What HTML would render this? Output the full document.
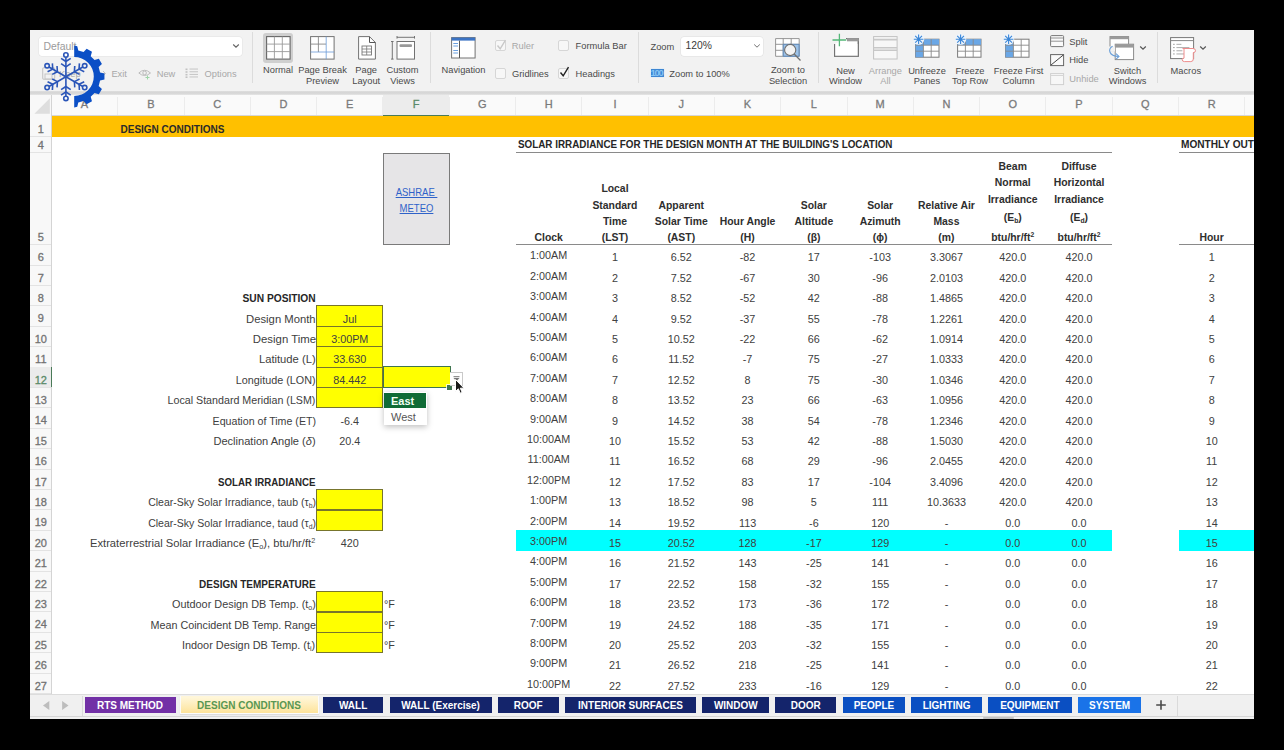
<!DOCTYPE html>
<html><head><meta charset="utf-8"><title>Excel</title><style>
*{margin:0;padding:0;box-sizing:border-box}
html,body{width:1284px;height:750px;background:#000;overflow:hidden}
body{position:relative;font-family:"Liberation Sans",sans-serif}
#app{position:absolute;left:30px;top:30px;width:1224px;height:689px;background:#fff;overflow:hidden}
#in{position:absolute;left:-30px;top:-30px;width:1284px;height:750px}
.a{position:absolute}
.t{position:absolute;white-space:nowrap;color:#404040;font-size:10.8px;line-height:12px}
.b{font-weight:bold}
.c{text-align:center}
.r{text-align:right}
sub,sup{font-size:65%;line-height:0}
sub{vertical-align:-0.25em}sup{vertical-align:0.55em}
.rb{font-size:9.2px;color:#4a4a4a;line-height:11px}
</style></head>
<body><div id="app"><div id="in">
<div class="a" style="left:30px;top:30px;width:1224px;height:62px;background:#f2f2f2"></div>
<div class="a" style="left:30px;top:91px;width:1224px;height:4px;background:linear-gradient(#dedede,#d4d4d4 50%,#e6e6e6)"></div>
<div class="a" style="left:39.4px;top:36.9px;width:203px;height:18.8px;background:#fff;border-radius:3px;box-shadow:0 0 0 0.5px #e2e2e2"></div>
<div class="t" style="left:43.5px;top:40.5px;font-size:10.4px;color:#9b9b9b">Default</div>
<svg class="a" style="left:232px;top:43px;overflow:visible" width="8" height="6" viewBox="0 0 8 6"><path d="M1.2,1.5 L4,4.2 L6.8,1.5" fill="none" stroke="#666" stroke-width="1.1"/></svg>
<svg class="a" style="left:42px;top:67px;overflow:visible" width="14" height="13" viewBox="0 0 14 13"><rect x="0.7" y="0.7" width="12" height="11.5" rx="1.2" fill="none" stroke="#c6c6c6" stroke-width="1.1"/><rect x="3" y="7" width="7" height="5" fill="none" stroke="#c6c6c6" stroke-width="1"/></svg>
<div class="t" style="left:59.0px;top:68.9px;font-size:9.3px;line-height:11px;color:#a8a8a8">Keep</div>
<svg class="a" style="left:97px;top:68px;overflow:visible" width="11" height="11" viewBox="0 0 11 11"><path d="M2,5.5 L8.5,5.5 M6,3 L8.5,5.5 L6,8" fill="none" stroke="#c4c4c4" stroke-width="1"/></svg>
<div class="t" style="left:111.4px;top:68.9px;font-size:9.3px;line-height:11px;color:#a8a8a8">Exit</div>
<svg class="a" style="left:138px;top:67px;overflow:visible" width="14" height="13" viewBox="0 0 14 13"><path d="M0.8,6 Q6.5,0.5 12.5,6 Q6.5,11 0.8,6 Z" fill="none" stroke="#bdbdbd" stroke-width="1"/><circle cx="6.6" cy="5.9" r="1.8" fill="none" stroke="#bdbdbd" stroke-width="1"/><path d="M9.5,8.5 L9.5,12.5 M7.5,10.5 L11.5,10.5" stroke="#9fd4a8" stroke-width="1"/></svg>
<div class="t" style="left:156.7px;top:68.9px;font-size:9.3px;line-height:11px;color:#a8a8a8">New</div>
<svg class="a" style="left:185px;top:68px;overflow:visible" width="14" height="10" viewBox="0 0 14 10"><rect x="0.5" y="0.5" width="2" height="1.6" fill="#c2c2c2"/><rect x="4.5" y="0.5" width="8.5" height="1.1" fill="#c8c8c8"/><rect x="0.5" y="3.2" width="2" height="1.6" fill="#c2c2c2"/><rect x="4.5" y="3.2" width="8.5" height="1.1" fill="#c8c8c8"/><rect x="0.5" y="5.9" width="2" height="1.6" fill="#c2c2c2"/><rect x="4.5" y="5.9" width="8.5" height="1.1" fill="#c8c8c8"/><rect x="0.5" y="8.4" width="2" height="1.6" fill="#c2c2c2"/><rect x="4.5" y="8.4" width="8.5" height="1.1" fill="#c8c8c8"/></svg>
<div class="t" style="left:204.6px;top:68.9px;font-size:9.3px;line-height:11px;color:#a8a8a8">Options</div>
<div class="a" style="left:252.2px;top:32px;width:1px;height:51px;background:#dcdcdc"></div>
<div class="a" style="left:262.6px;top:33px;width:30.3px;height:29.6px;background:#cfcfcf;border-radius:3px"></div>
<svg class="a" style="left:265.5px;top:36.2px;overflow:visible" width="25" height="24" viewBox="0 0 25 24"><rect x="0.6" y="0.6" width="23.5" height="22.5" fill="#fff" stroke="#666" stroke-width="1.1"/><path d="M8.4,0.6 V23.1 M16.3,0.6 V23.1 M0.6,8.1 H24.1 M0.6,15.6 H24.1" stroke="#9a9a9a" stroke-width="0.9"/></svg>
<div class="t c" style="left:238.1px;top:65.4px;width:80px;font-size:9.3px;line-height:11px;color:#4a4a4a">Normal</div>
<svg class="a" style="left:310px;top:36.2px;overflow:visible" width="25" height="24" viewBox="0 0 25 24"><rect x="0.6" y="0.6" width="23.5" height="22.5" fill="#fff" stroke="#727272" stroke-width="1"/><path d="M8.4,0.6 V16 M0.6,8.1 H16 " stroke="#888" stroke-width="0.9"/><path d="M16.2,0.6 V23.1 M0.6,16 H24.1" stroke="#6a9ad8" stroke-width="0.8"/></svg>
<div class="t c" style="left:282.5px;top:65.4px;width:80px;font-size:9.3px;line-height:11px;color:#4a4a4a">Page Break</div>
<div class="t c" style="left:282.5px;top:75.7px;width:80px;font-size:9.3px;line-height:11px;color:#4a4a4a">Preview</div>
<svg class="a" style="left:357.5px;top:36.2px;overflow:visible" width="18" height="24" viewBox="0 0 18 24"><path d="M0.6,0.6 H11.5 L17.4,6.5 V23.1 H0.6 Z" fill="#fff" stroke="#727272" stroke-width="1"/><path d="M11.5,0.6 V6.5 H17.4" fill="none" stroke="#555" stroke-width="1"/><rect x="4" y="10" width="9.5" height="9" fill="none" stroke="#777" stroke-width="0.9"/><path d="M4,13 H13.5 M4,16 H13.5 M8.7,10 V19" stroke="#777" stroke-width="0.8"/></svg>
<div class="t c" style="left:326.2px;top:65.4px;width:80px;font-size:9.3px;line-height:11px;color:#4a4a4a">Page</div>
<div class="t c" style="left:326.2px;top:75.7px;width:80px;font-size:9.3px;line-height:11px;color:#4a4a4a">Layout</div>
<svg class="a" style="left:390.6px;top:36.2px;overflow:visible" width="24" height="24" viewBox="0 0 24 24"><rect x="6" y="5.5" width="17.5" height="17.6" fill="#fff" stroke="#727272" stroke-width="1"/><rect x="8.5" y="8.3" width="12.5" height="2.6" rx="1" fill="#999"/><path d="M6,1.3 H23.5 M6,0 V2.6 M23.5,0 V2.6" stroke="#666" stroke-width="0.9"/><path d="M1.3,5.5 V23.1 M0,5.5 H2.6 M0,23.1 H2.6" stroke="#666" stroke-width="0.9"/></svg>
<div class="t c" style="left:362.5px;top:65.4px;width:80px;font-size:9.3px;line-height:11px;color:#4a4a4a">Custom</div>
<div class="t c" style="left:362.5px;top:75.7px;width:80px;font-size:9.3px;line-height:11px;color:#4a4a4a">Views</div>
<div class="a" style="left:429.8px;top:32px;width:1px;height:51px;background:#dcdcdc"></div>
<svg class="a" style="left:451.3px;top:36.5px;overflow:visible" width="25" height="22" viewBox="0 0 25 22"><rect x="0.6" y="0.6" width="23.5" height="20.4" fill="#fff" stroke="#727272" stroke-width="1"/><rect x="0.6" y="0.6" width="23.5" height="3" fill="#3b73c4"/><path d="M8.5,3.6 V21" stroke="#555" stroke-width="1"/><path d="M2.3,6.5 H7" stroke="#5a95dd" stroke-width="0.9"/><path d="M2.3,9 H7" stroke="#5a95dd" stroke-width="0.9"/><path d="M2.3,13.5 H7" stroke="#5a95dd" stroke-width="0.9"/><path d="M2.3,16 H7" stroke="#5a95dd" stroke-width="0.9"/></svg>
<div class="t c" style="left:428.5px;top:65.4px;width:70px;font-size:9.3px;line-height:11px;color:#4a4a4a">Navigation</div>
<div class="a" style="left:494.6px;top:40.4px;width:11px;height:11px;border-radius:2px;background:#f7f7f7;border:1px solid #d6d6d6"></div>
<svg class="a" style="left:495.6px;top:38.9px;overflow:visible" width="11" height="12" viewBox="0 0 11 12"><path d="M1.5,6.5 L4.2,9.8 L9.5,1.2" fill="none" stroke="#c8c8c8" stroke-width="1.4"/></svg>
<div class="t" style="left:511.8px;top:41.2px;font-size:9.3px;line-height:11px;color:#a8a8a8">Ruler</div>
<div class="a" style="left:558.4px;top:40.4px;width:11px;height:11px;border-radius:2px;background:#f7f7f7;border:1px solid #d6d6d6"></div>
<div class="t" style="left:575.6px;top:41.2px;font-size:9.3px;line-height:11px;color:#4a4a4a">Formula Bar</div>
<div class="a" style="left:494.6px;top:67.6px;width:11px;height:11px;border-radius:2px;background:#f7f7f7;border:1px solid #d6d6d6"></div>
<div class="t" style="left:512.0px;top:68.8px;font-size:9.3px;line-height:11px;color:#4a4a4a">Gridlines</div>
<div class="a" style="left:558.4px;top:67.6px;width:11px;height:11px;border-radius:2px;background:#f7f7f7;border:1px solid #d6d6d6"></div>
<svg class="a" style="left:559.4px;top:66.1px;overflow:visible" width="11" height="12" viewBox="0 0 11 12"><path d="M1.5,6.5 L4.2,9.8 L9.5,1.2" fill="none" stroke="#222" stroke-width="1.4"/></svg>
<div class="t" style="left:575.6px;top:68.8px;font-size:9.3px;line-height:11px;color:#4a4a4a">Headings</div>
<div class="a" style="left:637.7px;top:32px;width:1px;height:51px;background:#dcdcdc"></div>
<div class="t" style="left:650.5px;top:41.8px;font-size:9.3px;line-height:11px;color:#4a4a4a">Zoom</div>
<div class="a" style="left:680.8px;top:36.9px;width:82.6px;height:18.9px;background:#fff;border-radius:3px;box-shadow:0 0 0 0.5px #dedede"></div>
<div class="t" style="left:685.5px;top:40.4px;font-size:10.3px;color:#3a3a3a">120%</div>
<svg class="a" style="left:753px;top:43px;overflow:visible" width="8" height="6" viewBox="0 0 8 6"><path d="M1.2,1.5 L4,4.2 L6.8,1.5" fill="none" stroke="#727272" stroke-width="1"/></svg>
<div class="a" style="left:650.5px;top:69px;width:13.6px;height:8.4px;background:#3d86d2;box-shadow:0 0 1.5px #bfe0ff"></div>
<div class="t" style="left:650.6px;top:68.3px;font-size:9.5px;line-height:10px;color:#86c4f4;letter-spacing:-1.3px;font-weight:bold">100</div>
<div class="t" style="left:669.3px;top:68.8px;font-size:9.3px;line-height:11px;color:#4a4a4a">Zoom to 100%</div>
<svg class="a" style="left:775px;top:38.4px;overflow:visible" width="27" height="24" viewBox="0 0 27 24"><rect x="0.6" y="0.6" width="23.6" height="17.7" fill="#fff"/><rect x="8.2" y="6.3" width="16" height="12" fill="#9cc3ea"/><path d="M0.6,0.6 H24.2 V18.3 H0.6 Z M8.2,0.6 V18.3 M16.2,0.6 V6.3 M0.6,6.3 H24.2 M0.6,12.3 H8.2" fill="#fff" fill-opacity="0" stroke="#8a8a8a" stroke-width="0.9"/><path d="M8.2,6.3 H24.2 V18.3 H8.2 Z" fill="none" stroke="#5d8fc6" stroke-width="0.9"/><circle cx="15.2" cy="12" r="5.6" fill="#f4f4f4" stroke="#707070" stroke-width="1.1"/><path d="M19.2,16 L25.5,22.5" stroke="#707070" stroke-width="1.2"/></svg>
<div class="t c" style="left:748.0px;top:65.4px;width:80px;font-size:9.3px;line-height:11px;color:#4a4a4a">Zoom to</div>
<div class="t c" style="left:748.0px;top:75.8px;width:80px;font-size:9.3px;line-height:11px;color:#4a4a4a">Selection</div>
<div class="a" style="left:818.2px;top:32px;width:1px;height:51px;background:#dcdcdc"></div>
<svg class="a" style="left:832.5px;top:35.4px;overflow:visible" width="26" height="22" viewBox="0 0 26 22"><path d="M1.6,9 V21.3 H25.3 V3.6 H13" fill="#fff" stroke="#707070" stroke-width="1.1"/><rect x="1.6" y="9" width="23.7" height="12.3" fill="#fff"/><path d="M1.6,9 V21.3 H25.3 V3.6" fill="none" stroke="#707070" stroke-width="1.1"/><rect x="14" y="3.1" width="11.8" height="3.2" fill="#9a9a9a"/><path d="M6.4,-1.3 V11.3 M-0.5,5 H13.2" stroke="#54b878" stroke-width="1.3"/></svg>
<div class="t c" style="left:805.5px;top:65.7px;width:80px;font-size:9.3px;line-height:11px;color:#4a4a4a">New</div>
<div class="t c" style="left:805.5px;top:76.1px;width:80px;font-size:9.3px;line-height:11px;color:#4a4a4a">Window</div>
<svg class="a" style="left:873.2px;top:36.4px;overflow:visible" width="25" height="24" viewBox="0 0 25 24"><rect x="0.6" y="0.6" width="23.5" height="22.4" fill="#f7f7f7" stroke="#c2c2c2" stroke-width="1"/><path d="M0.6,3.6 H24 M0.6,11.8 H24 M0.6,14.2 H24" stroke="#c8c8c8" stroke-width="1.6"/></svg>
<div class="t c" style="left:845.4px;top:65.7px;width:80px;font-size:9.3px;line-height:11px;color:#a8a8a8">Arrange</div>
<div class="t c" style="left:845.4px;top:76.1px;width:80px;font-size:9.3px;line-height:11px;color:#a8a8a8">All</div>
<svg class="a" style="left:913.5px;top:34.5px;overflow:visible" width="26" height="23" viewBox="0 0 26 23"><rect x="1.6" y="4.2" width="23.40" height="18.00" fill="#fff" stroke="#7a7a7a" stroke-width="1"/><rect x="1.6" y="4.2" width="23.40" height="6.00" fill="#6aa7e6"/><rect x="1.6" y="4.2" width="7.80" height="18.00" fill="#6aa7e6"/><path d="M9.40,4.2 V22.2 M17.20,4.2 V22.2 M1.6,10.20 H25 M1.6,16.20 H25" stroke="#8a8a8a" stroke-width="0.9"/><circle cx="4.6" cy="4.2" r="5.6" fill="#eef4fb"/><path d="M4.6,-0.6 V9 M-0.2,4.2 H9.4 M1.2,0.8 L8,7.6 M1.2,7.6 L8,0.8" stroke="#3a86d8" stroke-width="1.1"/></svg>
<div class="t c" style="left:887.0px;top:65.7px;width:80px;font-size:9.3px;line-height:11px;color:#4a4a4a">Unfreeze</div>
<div class="t c" style="left:887.0px;top:76.1px;width:80px;font-size:9.3px;line-height:11px;color:#4a4a4a">Panes</div>
<svg class="a" style="left:955.6px;top:34.5px;overflow:visible" width="26" height="23" viewBox="0 0 26 23"><rect x="1.6" y="4.2" width="23.40" height="18.00" fill="#fff" stroke="#7a7a7a" stroke-width="1"/><rect x="1.6" y="4.2" width="23.40" height="6.00" fill="#6aa7e6"/><path d="M9.40,4.2 V22.2 M17.20,4.2 V22.2 M1.6,10.20 H25 M1.6,16.20 H25" stroke="#8a8a8a" stroke-width="0.9"/><circle cx="4.6" cy="4.2" r="5.6" fill="#eef4fb"/><path d="M4.6,-0.6 V9 M-0.2,4.2 H9.4 M1.2,0.8 L8,7.6 M1.2,7.6 L8,0.8" stroke="#3a86d8" stroke-width="1.1"/></svg>
<div class="t c" style="left:930.0px;top:65.7px;width:80px;font-size:9.3px;line-height:11px;color:#4a4a4a">Freeze</div>
<div class="t c" style="left:930.0px;top:76.1px;width:80px;font-size:9.3px;line-height:11px;color:#4a4a4a">Top Row</div>
<svg class="a" style="left:1004px;top:34.5px;overflow:visible" width="26" height="23" viewBox="0 0 26 23"><rect x="1.6" y="4.2" width="23.40" height="18.00" fill="#fff" stroke="#7a7a7a" stroke-width="1"/><rect x="1.6" y="4.2" width="7.80" height="18.00" fill="#6aa7e6"/><path d="M9.40,4.2 V22.2 M17.20,4.2 V22.2 M1.6,10.20 H25 M1.6,16.20 H25" stroke="#8a8a8a" stroke-width="0.9"/><circle cx="4.6" cy="4.2" r="5.6" fill="#eef4fb"/><path d="M4.6,-0.6 V9 M-0.2,4.2 H9.4 M1.2,0.8 L8,7.6 M1.2,7.6 L8,0.8" stroke="#3a86d8" stroke-width="1.1"/></svg>
<div class="t c" style="left:983.6px;top:65.7px;width:70px;font-size:9.3px;line-height:11px;color:#4a4a4a">Freeze First</div>
<div class="t c" style="left:978.6px;top:76.1px;width:80px;font-size:9.3px;line-height:11px;color:#4a4a4a">Column</div>
<svg class="a" style="left:1050px;top:35.1px;overflow:visible" width="15" height="12" viewBox="0 0 15 12"><rect x="0.6" y="0.6" width="13" height="11" rx="1" fill="#fafafa" stroke="#777" stroke-width="1"/><path d="M0.6,3 H13.6 M0.6,6.2 H13.6" stroke="#888" stroke-width="0.9"/></svg>
<div class="t" style="left:1069.3px;top:36.5px;font-size:9.3px;line-height:11px;color:#4a4a4a">Split</div>
<svg class="a" style="left:1050px;top:54px;overflow:visible" width="15" height="12" viewBox="0 0 15 12"><rect x="0.6" y="0.6" width="13" height="11" fill="#fafafa" stroke="#666" stroke-width="1"/><path d="M1,11 L13.3,1" stroke="#444" stroke-width="1"/></svg>
<div class="t" style="left:1069.3px;top:55.4px;font-size:9.3px;line-height:11px;color:#4a4a4a">Hide</div>
<svg class="a" style="left:1050px;top:72.5px;overflow:visible" width="15" height="12" viewBox="0 0 15 12"><rect x="0.6" y="0.6" width="13" height="11" fill="#f7f7f7" stroke="#d0d0d0" stroke-width="1"/><path d="M0.6,2.5 H13.6" stroke="#d6d6d6" stroke-width="1"/></svg>
<div class="t" style="left:1069.3px;top:74.2px;font-size:9.3px;line-height:11px;color:#a8a8a8">Unhide</div>
<svg class="a" style="left:1108.7px;top:36px;overflow:visible" width="26" height="25" viewBox="0 0 26 25"><rect x="1" y="0.6" width="18.6" height="14" fill="#fff" stroke="#8a8a8a" stroke-width="1"/><rect x="1" y="0.6" width="18.6" height="2.6" fill="#9a9a9a"/><rect x="6.2" y="8.2" width="18.4" height="15.4" fill="#fff" stroke="#8a8a8a" stroke-width="1"/><rect x="6.2" y="8.2" width="18.4" height="3.4" fill="#9a9a9a"/><rect x="0" y="10.5" width="6" height="5" fill="#f2f2f2"/><path d="M3.6,10.3 C-1.2,13 -0.5,20.2 9.6,20.4" fill="none" stroke="#6a9fd8" stroke-width="1.1"/><path d="M7,17.6 L10,20.4 L7,23.2" fill="none" stroke="#6a9fd8" stroke-width="1.1"/></svg>
<svg class="a" style="left:1139px;top:45px;overflow:visible" width="8" height="6" viewBox="0 0 8 6"><path d="M1.2,1.5 L4,4.2 L6.8,1.5" fill="none" stroke="#555" stroke-width="1.2"/></svg>
<div class="t c" style="left:1087.5px;top:65.7px;width:80px;font-size:9.3px;line-height:11px;color:#4a4a4a">Switch</div>
<div class="t c" style="left:1087.5px;top:75.9px;width:80px;font-size:9.3px;line-height:11px;color:#4a4a4a">Windows</div>
<div class="a" style="left:1157.0px;top:32px;width:1px;height:51px;background:#dcdcdc"></div>
<svg class="a" style="left:1169.5px;top:36.9px;overflow:visible" width="26" height="26" viewBox="0 0 26 26"><rect x="0.6" y="0.6" width="23" height="21" fill="#fff" stroke="#777" stroke-width="1"/><path d="M0.6,3.6 H23.6" stroke="#888" stroke-width="1"/><rect x="3.2" y="6.8" width="1.4" height="1.1" fill="#999"/><rect x="6.4" y="6.8" width="5" height="1.1" fill="#b4b4b4"/><rect x="3.2" y="10" width="1.4" height="1.1" fill="#999"/><rect x="6.4" y="10" width="13" height="1.1" fill="#b4b4b4"/><rect x="3.2" y="13.2" width="1.4" height="1.1" fill="#999"/><rect x="6.4" y="13.2" width="6" height="1.1" fill="#b4b4b4"/><rect x="3.2" y="16.4" width="1.4" height="1.1" fill="#999"/><rect x="6.4" y="16.4" width="8" height="1.1" fill="#b4b4b4"/><path d="M12.5,11.5 H23 Q25.5,11.5 25.5,13.8 Q25.5,15.6 23.3,15.6 L23.3,15.6 V22 Q23.3,24.6 20.8,24.6 H14.5 Q12.2,24.6 12.2,22.6 Q12.2,21.2 14,21.2 V11.5" fill="#fff" stroke="#ee8c8c" stroke-width="1"/></svg>
<svg class="a" style="left:1199px;top:45px;overflow:visible" width="8" height="6" viewBox="0 0 8 6"><path d="M1.2,1.5 L4,4.2 L6.8,1.5" fill="none" stroke="#555" stroke-width="1.2"/></svg>
<div class="t c" style="left:1145.8px;top:65.7px;width:80px;font-size:9.3px;line-height:11px;color:#4a4a4a">Macros</div>
<div class="a" style="left:30px;top:95px;width:1224px;height:21px;background:#fafafa;border-bottom:1.5px solid #d6d6d6"></div>
<div class="a" style="left:30px;top:95px;width:21.6px;height:600px;background:#f8f8f8;border-right:1px solid #d4d4d4"></div>
<svg class="a" style="left:30px;top:95px" width="22" height="21"><polygon points="4.4,18.8 19.9,3.3 19.9,18.8" fill="#dedede"/></svg>
<div class="a" style="left:117.2px;top:97px;width:1px;height:18px;background:#ececec"></div>
<div class="t c" style="left:51.4px;top:98.3px;width:66.3px;font-size:11px;line-height:13px;color:#7a7a7a;-webkit-text-stroke:0.3px #7a7a7a">A</div>
<div class="a" style="left:183.5px;top:97px;width:1px;height:18px;background:#ececec"></div>
<div class="t c" style="left:117.7px;top:98.3px;width:66.3px;font-size:11px;line-height:13px;color:#7a7a7a;-webkit-text-stroke:0.3px #7a7a7a">B</div>
<div class="a" style="left:249.8px;top:97px;width:1px;height:18px;background:#ececec"></div>
<div class="t c" style="left:184.0px;top:98.3px;width:66.3px;font-size:11px;line-height:13px;color:#7a7a7a;-webkit-text-stroke:0.3px #7a7a7a">C</div>
<div class="a" style="left:316.1px;top:97px;width:1px;height:18px;background:#ececec"></div>
<div class="t c" style="left:250.3px;top:98.3px;width:66.3px;font-size:11px;line-height:13px;color:#7a7a7a;-webkit-text-stroke:0.3px #7a7a7a">D</div>
<div class="a" style="left:382.4px;top:97px;width:1px;height:18px;background:#ececec"></div>
<div class="t c" style="left:316.6px;top:98.3px;width:66.3px;font-size:11px;line-height:13px;color:#7a7a7a;-webkit-text-stroke:0.3px #7a7a7a">E</div>
<div class="a" style="left:382.9px;top:95px;width:66.3px;height:21px;background:#ececec;border-bottom:1.7px solid #4a7a58"></div>
<div class="a" style="left:448.7px;top:97px;width:1px;height:18px;background:#ececec"></div>
<div class="t c" style="left:382.9px;top:98.3px;width:66.3px;font-size:11px;line-height:13px;color:#5a8a68;-webkit-text-stroke:0.3px #5a8a68">F</div>
<div class="a" style="left:515.0px;top:97px;width:1px;height:18px;background:#ececec"></div>
<div class="t c" style="left:449.2px;top:98.3px;width:66.3px;font-size:11px;line-height:13px;color:#7a7a7a;-webkit-text-stroke:0.3px #7a7a7a">G</div>
<div class="a" style="left:581.3px;top:97px;width:1px;height:18px;background:#ececec"></div>
<div class="t c" style="left:515.5px;top:98.3px;width:66.3px;font-size:11px;line-height:13px;color:#7a7a7a;-webkit-text-stroke:0.3px #7a7a7a">H</div>
<div class="a" style="left:647.6px;top:97px;width:1px;height:18px;background:#ececec"></div>
<div class="t c" style="left:581.8px;top:98.3px;width:66.3px;font-size:11px;line-height:13px;color:#7a7a7a;-webkit-text-stroke:0.3px #7a7a7a">I</div>
<div class="a" style="left:713.9px;top:97px;width:1px;height:18px;background:#ececec"></div>
<div class="t c" style="left:648.1px;top:98.3px;width:66.3px;font-size:11px;line-height:13px;color:#7a7a7a;-webkit-text-stroke:0.3px #7a7a7a">J</div>
<div class="a" style="left:780.2px;top:97px;width:1px;height:18px;background:#ececec"></div>
<div class="t c" style="left:714.4px;top:98.3px;width:66.3px;font-size:11px;line-height:13px;color:#7a7a7a;-webkit-text-stroke:0.3px #7a7a7a">K</div>
<div class="a" style="left:846.5px;top:97px;width:1px;height:18px;background:#ececec"></div>
<div class="t c" style="left:780.7px;top:98.3px;width:66.3px;font-size:11px;line-height:13px;color:#7a7a7a;-webkit-text-stroke:0.3px #7a7a7a">L</div>
<div class="a" style="left:912.8px;top:97px;width:1px;height:18px;background:#ececec"></div>
<div class="t c" style="left:847.0px;top:98.3px;width:66.3px;font-size:11px;line-height:13px;color:#7a7a7a;-webkit-text-stroke:0.3px #7a7a7a">M</div>
<div class="a" style="left:979.1px;top:97px;width:1px;height:18px;background:#ececec"></div>
<div class="t c" style="left:913.3px;top:98.3px;width:66.3px;font-size:11px;line-height:13px;color:#7a7a7a;-webkit-text-stroke:0.3px #7a7a7a">N</div>
<div class="a" style="left:1045.4px;top:97px;width:1px;height:18px;background:#ececec"></div>
<div class="t c" style="left:979.6px;top:98.3px;width:66.3px;font-size:11px;line-height:13px;color:#7a7a7a;-webkit-text-stroke:0.3px #7a7a7a">O</div>
<div class="a" style="left:1111.7px;top:97px;width:1px;height:18px;background:#ececec"></div>
<div class="t c" style="left:1045.9px;top:98.3px;width:66.3px;font-size:11px;line-height:13px;color:#7a7a7a;-webkit-text-stroke:0.3px #7a7a7a">P</div>
<div class="a" style="left:1178.0px;top:97px;width:1px;height:18px;background:#ececec"></div>
<div class="t c" style="left:1112.2px;top:98.3px;width:66.3px;font-size:11px;line-height:13px;color:#7a7a7a;-webkit-text-stroke:0.3px #7a7a7a">Q</div>
<div class="a" style="left:1244.3px;top:97px;width:1px;height:18px;background:#ececec"></div>
<div class="t c" style="left:1178.5px;top:98.3px;width:66.3px;font-size:11px;line-height:13px;color:#7a7a7a;-webkit-text-stroke:0.3px #7a7a7a">R</div>
<div class="a" style="left:1310.6px;top:97px;width:1px;height:18px;background:#ececec"></div>
<div class="t c" style="left:1244.8px;top:98.3px;width:66.3px;font-size:11px;line-height:13px;color:#7a7a7a;-webkit-text-stroke:0.3px #7a7a7a">S</div>
<div class="a" style="left:30px;top:136.0px;width:21px;height:1px;background:#e3e3e3"></div>
<div class="t c" style="left:30px;top:122.5px;width:21.6px;font-size:11px;line-height:13px;color:#727272;-webkit-text-stroke:0.3px #727272">1</div>
<div class="a" style="left:30px;top:152.2px;width:21px;height:1px;background:#e3e3e3"></div>
<div class="t c" style="left:30px;top:138.7px;width:21.6px;font-size:11px;line-height:13px;color:#727272;-webkit-text-stroke:0.3px #727272">4</div>
<div class="a" style="left:30px;top:244.3px;width:21px;height:1px;background:#e3e3e3"></div>
<div class="t c" style="left:30px;top:230.8px;width:21.6px;font-size:11px;line-height:13px;color:#727272;-webkit-text-stroke:0.3px #727272">5</div>
<div class="a" style="left:30px;top:264.6px;width:21px;height:1px;background:#e3e3e3"></div>
<div class="t c" style="left:30px;top:251.1px;width:21.6px;font-size:11px;line-height:13px;color:#727272;-webkit-text-stroke:0.3px #727272">6</div>
<div class="a" style="left:30px;top:285.0px;width:21px;height:1px;background:#e3e3e3"></div>
<div class="t c" style="left:30px;top:271.5px;width:21.6px;font-size:11px;line-height:13px;color:#727272;-webkit-text-stroke:0.3px #727272">7</div>
<div class="a" style="left:30px;top:305.4px;width:21px;height:1px;background:#e3e3e3"></div>
<div class="t c" style="left:30px;top:291.9px;width:21.6px;font-size:11px;line-height:13px;color:#727272;-webkit-text-stroke:0.3px #727272">8</div>
<div class="a" style="left:30px;top:325.8px;width:21px;height:1px;background:#e3e3e3"></div>
<div class="t c" style="left:30px;top:312.3px;width:21.6px;font-size:11px;line-height:13px;color:#727272;-webkit-text-stroke:0.3px #727272">9</div>
<div class="a" style="left:30px;top:346.2px;width:21px;height:1px;background:#e3e3e3"></div>
<div class="t c" style="left:30px;top:332.7px;width:21.6px;font-size:11px;line-height:13px;color:#727272;-webkit-text-stroke:0.3px #727272">10</div>
<div class="a" style="left:30px;top:366.6px;width:21px;height:1px;background:#e3e3e3"></div>
<div class="t c" style="left:30px;top:353.1px;width:21.6px;font-size:11px;line-height:13px;color:#727272;-webkit-text-stroke:0.3px #727272">11</div>
<div class="a" style="left:30px;top:367.1px;width:21.6px;height:20.4px;background:#ebebeb;border-right:1.7px solid #4a7a58"></div>
<div class="a" style="left:30px;top:387.0px;width:21px;height:1px;background:#e3e3e3"></div>
<div class="t c" style="left:30px;top:373.5px;width:21.6px;font-size:11px;line-height:13px;color:#5a8a68;-webkit-text-stroke:0.3px #5a8a68">12</div>
<div class="a" style="left:30px;top:407.4px;width:21px;height:1px;background:#e3e3e3"></div>
<div class="t c" style="left:30px;top:393.9px;width:21.6px;font-size:11px;line-height:13px;color:#727272;-webkit-text-stroke:0.3px #727272">13</div>
<div class="a" style="left:30px;top:427.8px;width:21px;height:1px;background:#e3e3e3"></div>
<div class="t c" style="left:30px;top:414.3px;width:21.6px;font-size:11px;line-height:13px;color:#727272;-webkit-text-stroke:0.3px #727272">14</div>
<div class="a" style="left:30px;top:448.2px;width:21px;height:1px;background:#e3e3e3"></div>
<div class="t c" style="left:30px;top:434.7px;width:21.6px;font-size:11px;line-height:13px;color:#727272;-webkit-text-stroke:0.3px #727272">15</div>
<div class="a" style="left:30px;top:468.6px;width:21px;height:1px;background:#e3e3e3"></div>
<div class="t c" style="left:30px;top:455.1px;width:21.6px;font-size:11px;line-height:13px;color:#727272;-webkit-text-stroke:0.3px #727272">16</div>
<div class="a" style="left:30px;top:489.0px;width:21px;height:1px;background:#e3e3e3"></div>
<div class="t c" style="left:30px;top:475.5px;width:21.6px;font-size:11px;line-height:13px;color:#727272;-webkit-text-stroke:0.3px #727272">17</div>
<div class="a" style="left:30px;top:509.4px;width:21px;height:1px;background:#e3e3e3"></div>
<div class="t c" style="left:30px;top:495.9px;width:21.6px;font-size:11px;line-height:13px;color:#727272;-webkit-text-stroke:0.3px #727272">18</div>
<div class="a" style="left:30px;top:529.8px;width:21px;height:1px;background:#e3e3e3"></div>
<div class="t c" style="left:30px;top:516.3px;width:21.6px;font-size:11px;line-height:13px;color:#727272;-webkit-text-stroke:0.3px #727272">19</div>
<div class="a" style="left:30px;top:550.2px;width:21px;height:1px;background:#e3e3e3"></div>
<div class="t c" style="left:30px;top:536.7px;width:21.6px;font-size:11px;line-height:13px;color:#727272;-webkit-text-stroke:0.3px #727272">20</div>
<div class="a" style="left:30px;top:570.6px;width:21px;height:1px;background:#e3e3e3"></div>
<div class="t c" style="left:30px;top:557.1px;width:21.6px;font-size:11px;line-height:13px;color:#727272;-webkit-text-stroke:0.3px #727272">21</div>
<div class="a" style="left:30px;top:591.0px;width:21px;height:1px;background:#e3e3e3"></div>
<div class="t c" style="left:30px;top:577.5px;width:21.6px;font-size:11px;line-height:13px;color:#727272;-webkit-text-stroke:0.3px #727272">22</div>
<div class="a" style="left:30px;top:611.4px;width:21px;height:1px;background:#e3e3e3"></div>
<div class="t c" style="left:30px;top:597.9px;width:21.6px;font-size:11px;line-height:13px;color:#727272;-webkit-text-stroke:0.3px #727272">23</div>
<div class="a" style="left:30px;top:631.8px;width:21px;height:1px;background:#e3e3e3"></div>
<div class="t c" style="left:30px;top:618.3px;width:21.6px;font-size:11px;line-height:13px;color:#727272;-webkit-text-stroke:0.3px #727272">24</div>
<div class="a" style="left:30px;top:652.2px;width:21px;height:1px;background:#e3e3e3"></div>
<div class="t c" style="left:30px;top:638.7px;width:21.6px;font-size:11px;line-height:13px;color:#727272;-webkit-text-stroke:0.3px #727272">25</div>
<div class="a" style="left:30px;top:672.6px;width:21px;height:1px;background:#e3e3e3"></div>
<div class="t c" style="left:30px;top:659.1px;width:21.6px;font-size:11px;line-height:13px;color:#727272;-webkit-text-stroke:0.3px #727272">26</div>
<div class="a" style="left:30px;top:693.0px;width:21px;height:1px;background:#e3e3e3"></div>
<div class="t c" style="left:30px;top:679.5px;width:21.6px;font-size:11px;line-height:13px;color:#727272;-webkit-text-stroke:0.3px #727272">27</div>
<div class="a" style="left:52px;top:116px;width:1202px;height:20.5px;background:#ffc000"></div>
<div class="t b" style="left:120.5px;top:124px;font-size:10px;color:#2a2a2a">DESIGN CONDITIONS</div>
<div class="a" style="left:515.5px;top:530.3px;width:596.7px;height:20.4px;background:#00ffff"></div>
<div class="a" style="left:1178.5px;top:530.3px;width:132.6px;height:20.4px;background:#00ffff"></div>
<div class="a" style="left:383px;top:152.5px;width:67px;height:92.5px;background:#e6e5e7;border:1.3px solid #7a7a7a"></div>
<div class="t c" style="left:383px;top:183.5px;width:67px;color:#2f62c9;font-size:10.8px;line-height:16px;transform:scaleX(0.88)"><span style="text-decoration:underline">ASHRAE&nbsp;</span><br><span style="text-decoration:underline">METEO</span></div>
<div class="t r b" style="top:292.9px;right:968.4px;font-size:10px;color:#262626;transform:scaleX(1.021);transform-origin:100% 50%;">SUN POSITION</div>
<div class="t r" style="top:312.5px;right:968.4px;transform:scaleX(1.044);transform-origin:100% 50%;">Design Month</div>
<div class="t r" style="top:332.9px;right:968.4px;transform:scaleX(1.053);transform-origin:100% 50%;">Design Time</div>
<div class="t r" style="top:353.3px;right:968.4px;transform:scaleX(1.038);transform-origin:100% 50%;">Latitude (L)</div>
<div class="t r" style="top:373.7px;right:968.4px;transform:scaleX(1.000);transform-origin:100% 50%;">Longitude (LON)</div>
<div class="t r" style="top:394.1px;right:968.4px;transform:scaleX(0.990);transform-origin:100% 50%;">Local Standard Meridian (LSM)</div>
<div class="t r" style="top:414.5px;right:968.4px;transform:scaleX(0.985);transform-origin:100% 50%;">Equation of Time (ET)</div>
<div class="t r" style="top:434.9px;right:968.4px;transform:scaleX(1.026);transform-origin:100% 50%;">Declination Angle (<i style="font-style:italic">&delta;</i>)</div>
<div class="t r b" style="top:476.5px;right:968.4px;font-size:10px;color:#262626;transform:scaleX(0.970);transform-origin:100% 50%;">SOLAR IRRADIANCE</div>
<div class="t r" style="top:496.1px;right:968.4px;transform:scaleX(0.976);transform-origin:100% 50%;">Clear-Sky Solar Irradiance, taub (&tau;<sub>b</sub>)</div>
<div class="t r" style="top:516.5px;right:968.4px;transform:scaleX(0.976);transform-origin:100% 50%;">Clear-Sky Solar Irradiance, taud (&tau;<sub>d</sub>)</div>
<div class="t r" style="top:536.9px;right:968.4px;transform:scaleX(1.037);transform-origin:100% 50%;">Extraterrestrial Solar Irradiance (E<sub>o</sub>), btu/hr/ft<sup>2</sup></div>
<div class="t r b" style="top:578.5px;right:968.4px;font-size:10px;color:#262626;transform:scaleX(1.000);transform-origin:100% 50%;">DESIGN TEMPERATURE</div>
<div class="t r" style="top:598.1px;right:968.4px;transform:scaleX(1.007);transform-origin:100% 50%;">Outdoor Design DB Temp. (t<sub>o</sub>)</div>
<div class="t r" style="top:618.5px;right:968.4px;transform:scaleX(0.997);transform-origin:100% 50%;">Mean Coincident DB Temp. Range</div>
<div class="t r" style="top:638.9px;right:968.4px;transform:scaleX(1.008);transform-origin:100% 50%;">Indoor Design DB Temp. (t<sub>i</sub>)</div>
<div class="a" style="left:316.1px;top:305.4px;width:67.3px;height:103.0px;background:#ffff00;border:1.2px solid #77752c"></div>
<div class="a" style="left:316.1px;top:325.8px;width:67.3px;height:1.2px;background:#77752c"></div>
<div class="a" style="left:316.1px;top:346.2px;width:67.3px;height:1.2px;background:#77752c"></div>
<div class="a" style="left:316.1px;top:366.6px;width:67.3px;height:1.2px;background:#77752c"></div>
<div class="a" style="left:316.1px;top:387.0px;width:67.3px;height:1.2px;background:#77752c"></div>
<div class="a" style="left:316.1px;top:489.0px;width:67.3px;height:41.8px;background:#ffff00;border:1.2px solid #77752c"></div>
<div class="a" style="left:316.1px;top:509.4px;width:67.3px;height:1.2px;background:#77752c"></div>
<div class="a" style="left:316.1px;top:591.0px;width:67.3px;height:62.2px;background:#ffff00;border:1.2px solid #77752c"></div>
<div class="a" style="left:316.1px;top:611.4px;width:67.3px;height:1.2px;background:#77752c"></div>
<div class="a" style="left:316.1px;top:631.8px;width:67.3px;height:1.2px;background:#77752c"></div>
<div class="a" style="left:382.8px;top:366.2px;width:67.8px;height:21.8px;background:#ffff00;border:1.6px solid #3f7550"></div>
<div class="a" style="left:447px;top:385.2px;width:5px;height:5px;background:#3f7550;box-shadow:0 0 0 0.8px #fff"></div>
<div class="a" style="left:450.3px;top:371.8px;width:12.6px;height:13.8px;background:#fff;border:1px solid #c9c9c9;border-left:none"></div>
<svg class="a" style="left:452px;top:375px" width="10" height="10"><rect x="1.5" y="1.2" width="6" height="1" fill="#777"/><polygon points="1.5,3 7.5,3 4.5,6.2" fill="#777"/></svg>
<div class="a" style="left:383.5px;top:392.2px;width:43px;height:33px;background:#fff;box-shadow:0 2px 6px rgba(0,0,0,0.25)"></div>
<div class="a" style="left:384.4px;top:393px;width:41.8px;height:15.4px;background:#106b36"></div>
<div class="t" style="left:391px;top:395.3px;color:#f2fff4;font-size:11px;font-weight:bold">East</div>
<div class="t" style="left:391px;top:411px;color:#555;font-size:11px">West</div>
<svg class="a" style="left:453px;top:378px" width="14" height="18"><path d="M2.5,1.5 L2.5,13.5 L5.3,10.8 L7.3,15.2 L9.2,14.4 L7.3,10.2 L11,10.2 Z" fill="#1a1a1a" stroke="#fff" stroke-width="1"/></svg>
<div class="t c" style="top:312.5px;left:316.6px;width:66.3px;">Jul</div>
<div class="t c" style="top:332.9px;left:316.6px;width:66.3px;">3:00PM</div>
<div class="t c" style="top:353.3px;left:316.6px;width:66.3px;">33.630</div>
<div class="t c" style="top:373.7px;left:316.6px;width:66.3px;">84.442</div>
<div class="t c" style="top:414.5px;left:316.6px;width:66.3px;">-6.4</div>
<div class="t c" style="top:434.9px;left:316.6px;width:66.3px;">20.4</div>
<div class="t c" style="top:536.9px;left:316.6px;width:66.3px;">420</div>
<div class="t" style="top:598.1px;left:385.4px;margin-left:-1.5px;">&deg;F</div>
<div class="t" style="top:618.5px;left:385.4px;margin-left:-1.5px;">&deg;F</div>
<div class="t" style="top:638.9px;left:385.4px;margin-left:-1.5px;">&deg;F</div>
<div class="a" style="left:515.5px;top:151.7px;width:596.7px;height:1.2px;background:#8a8a8a"></div>
<div class="a" style="left:515.5px;top:243.8px;width:596.7px;height:1.2px;background:#8a8a8a"></div>
<div class="a" style="left:1178.5px;top:151.7px;width:132.6px;height:1.2px;background:#8a8a8a"></div>
<div class="a" style="left:1178.5px;top:243.8px;width:132.6px;height:1.2px;background:#8a8a8a"></div>
<div class="t b" style="left:518px;top:138.3px;font-size:10.7px;color:#262626;transform:scaleX(0.922);transform-origin:0 0">SOLAR IRRADIANCE FOR THE DESIGN MONTH AT THE BUILDING&#39;S LOCATION</div>
<div class="t b" style="left:1181px;top:138.3px;font-size:10.7px;color:#262626;transform:scaleX(0.945);transform-origin:0 0">MONTHLY OUTDOOR</div>
<div class="t c b" style="left:515.5px;top:232.1px;width:66.3px;font-size:10.4px;color:#2e2e2e">Clock</div>
<div class="t c b" style="left:581.8px;top:183.2px;width:66.3px;font-size:10.4px;color:#2e2e2e">Local</div>
<div class="t c b" style="left:581.8px;top:199.5px;width:66.3px;font-size:10.4px;color:#2e2e2e">Standard</div>
<div class="t c b" style="left:581.8px;top:215.8px;width:66.3px;font-size:10.4px;color:#2e2e2e">Time</div>
<div class="t c b" style="left:581.8px;top:232.1px;width:66.3px;font-size:10.4px;color:#2e2e2e">(LST)</div>
<div class="t c b" style="left:648.1px;top:199.5px;width:66.3px;font-size:10.4px;color:#2e2e2e">Apparent</div>
<div class="t c b" style="left:648.1px;top:215.8px;width:66.3px;font-size:10.4px;color:#2e2e2e">Solar Time</div>
<div class="t c b" style="left:648.1px;top:232.1px;width:66.3px;font-size:10.4px;color:#2e2e2e">(AST)</div>
<div class="t c b" style="left:714.4px;top:215.8px;width:66.3px;font-size:10.4px;color:#2e2e2e">Hour Angle</div>
<div class="t c b" style="left:714.4px;top:232.1px;width:66.3px;font-size:10.4px;color:#2e2e2e">(H)</div>
<div class="t c b" style="left:780.7px;top:199.5px;width:66.3px;font-size:10.4px;color:#2e2e2e">Solar</div>
<div class="t c b" style="left:780.7px;top:215.8px;width:66.3px;font-size:10.4px;color:#2e2e2e">Altitude</div>
<div class="t c b" style="left:780.7px;top:232.1px;width:66.3px;font-size:10.4px;color:#2e2e2e">(&beta;)</div>
<div class="t c b" style="left:847.0px;top:199.5px;width:66.3px;font-size:10.4px;color:#2e2e2e">Solar</div>
<div class="t c b" style="left:847.0px;top:215.8px;width:66.3px;font-size:10.4px;color:#2e2e2e">Azimuth</div>
<div class="t c b" style="left:847.0px;top:232.1px;width:66.3px;font-size:10.4px;color:#2e2e2e">(&#981;)</div>
<div class="t c b" style="left:913.3px;top:199.5px;width:66.3px;font-size:10.4px;color:#2e2e2e">Relative Air</div>
<div class="t c b" style="left:913.3px;top:215.8px;width:66.3px;font-size:10.4px;color:#2e2e2e">Mass</div>
<div class="t c b" style="left:913.3px;top:232.1px;width:66.3px;font-size:10.4px;color:#2e2e2e">(m)</div>
<div class="t c b" style="left:979.6px;top:161.1px;width:66.3px;font-size:10.4px;color:#2e2e2e">Beam</div>
<div class="t c b" style="left:979.6px;top:177.4px;width:66.3px;font-size:10.4px;color:#2e2e2e">Normal</div>
<div class="t c b" style="left:979.6px;top:193.8px;width:66.3px;font-size:10.4px;color:#2e2e2e">Irradiance</div>
<div class="t c b" style="left:979.6px;top:211.8px;width:66.3px;font-size:10.4px;color:#2e2e2e">(E<sub>b</sub>)</div>
<div class="t c b" style="left:979.6px;top:231.6px;width:66.3px;font-size:10.4px;color:#2e2e2e">btu/hr/ft<sup>2</sup></div>
<div class="t c b" style="left:1045.9px;top:161.1px;width:66.3px;font-size:10.4px;color:#2e2e2e">Diffuse</div>
<div class="t c b" style="left:1045.9px;top:177.4px;width:66.3px;font-size:10.4px;color:#2e2e2e">Horizontal</div>
<div class="t c b" style="left:1045.9px;top:193.8px;width:66.3px;font-size:10.4px;color:#2e2e2e">Irradiance</div>
<div class="t c b" style="left:1045.9px;top:211.8px;width:66.3px;font-size:10.4px;color:#2e2e2e">(E<sub>d</sub>)</div>
<div class="t c b" style="left:1045.9px;top:231.6px;width:66.3px;font-size:10.4px;color:#2e2e2e">btu/hr/ft<sup>2</sup></div>
<div class="t c b" style="left:1178.5px;top:232.1px;width:66.3px;font-size:10.4px;color:#2e2e2e">Hour</div>
<div class="t c" style="top:249.3px;left:515.5px;width:66.3px;">1:00AM</div>
<div class="t c" style="top:251.3px;left:581.8px;width:66.3px;">1</div>
<div class="t c" style="top:251.3px;left:648.1px;width:66.3px;">6.52</div>
<div class="t c" style="top:251.3px;left:714.4px;width:66.3px;">-82</div>
<div class="t c" style="top:251.3px;left:780.7px;width:66.3px;">17</div>
<div class="t c" style="top:251.3px;left:847.0px;width:66.3px;">-103</div>
<div class="t c" style="top:251.3px;left:913.3px;width:66.3px;">3.3067</div>
<div class="t c" style="top:251.3px;left:979.6px;width:66.3px;">420.0</div>
<div class="t c" style="top:251.3px;left:1045.9px;width:66.3px;">420.0</div>
<div class="t c" style="top:251.3px;left:1178.5px;width:66.3px;">1</div>
<div class="t c" style="top:269.7px;left:515.5px;width:66.3px;">2:00AM</div>
<div class="t c" style="top:271.7px;left:581.8px;width:66.3px;">2</div>
<div class="t c" style="top:271.7px;left:648.1px;width:66.3px;">7.52</div>
<div class="t c" style="top:271.7px;left:714.4px;width:66.3px;">-67</div>
<div class="t c" style="top:271.7px;left:780.7px;width:66.3px;">30</div>
<div class="t c" style="top:271.7px;left:847.0px;width:66.3px;">-96</div>
<div class="t c" style="top:271.7px;left:913.3px;width:66.3px;">2.0103</div>
<div class="t c" style="top:271.7px;left:979.6px;width:66.3px;">420.0</div>
<div class="t c" style="top:271.7px;left:1045.9px;width:66.3px;">420.0</div>
<div class="t c" style="top:271.7px;left:1178.5px;width:66.3px;">2</div>
<div class="t c" style="top:290.1px;left:515.5px;width:66.3px;">3:00AM</div>
<div class="t c" style="top:292.1px;left:581.8px;width:66.3px;">3</div>
<div class="t c" style="top:292.1px;left:648.1px;width:66.3px;">8.52</div>
<div class="t c" style="top:292.1px;left:714.4px;width:66.3px;">-52</div>
<div class="t c" style="top:292.1px;left:780.7px;width:66.3px;">42</div>
<div class="t c" style="top:292.1px;left:847.0px;width:66.3px;">-88</div>
<div class="t c" style="top:292.1px;left:913.3px;width:66.3px;">1.4865</div>
<div class="t c" style="top:292.1px;left:979.6px;width:66.3px;">420.0</div>
<div class="t c" style="top:292.1px;left:1045.9px;width:66.3px;">420.0</div>
<div class="t c" style="top:292.1px;left:1178.5px;width:66.3px;">3</div>
<div class="t c" style="top:310.5px;left:515.5px;width:66.3px;">4:00AM</div>
<div class="t c" style="top:312.5px;left:581.8px;width:66.3px;">4</div>
<div class="t c" style="top:312.5px;left:648.1px;width:66.3px;">9.52</div>
<div class="t c" style="top:312.5px;left:714.4px;width:66.3px;">-37</div>
<div class="t c" style="top:312.5px;left:780.7px;width:66.3px;">55</div>
<div class="t c" style="top:312.5px;left:847.0px;width:66.3px;">-78</div>
<div class="t c" style="top:312.5px;left:913.3px;width:66.3px;">1.2261</div>
<div class="t c" style="top:312.5px;left:979.6px;width:66.3px;">420.0</div>
<div class="t c" style="top:312.5px;left:1045.9px;width:66.3px;">420.0</div>
<div class="t c" style="top:312.5px;left:1178.5px;width:66.3px;">4</div>
<div class="t c" style="top:330.9px;left:515.5px;width:66.3px;">5:00AM</div>
<div class="t c" style="top:332.9px;left:581.8px;width:66.3px;">5</div>
<div class="t c" style="top:332.9px;left:648.1px;width:66.3px;">10.52</div>
<div class="t c" style="top:332.9px;left:714.4px;width:66.3px;">-22</div>
<div class="t c" style="top:332.9px;left:780.7px;width:66.3px;">66</div>
<div class="t c" style="top:332.9px;left:847.0px;width:66.3px;">-62</div>
<div class="t c" style="top:332.9px;left:913.3px;width:66.3px;">1.0914</div>
<div class="t c" style="top:332.9px;left:979.6px;width:66.3px;">420.0</div>
<div class="t c" style="top:332.9px;left:1045.9px;width:66.3px;">420.0</div>
<div class="t c" style="top:332.9px;left:1178.5px;width:66.3px;">5</div>
<div class="t c" style="top:351.3px;left:515.5px;width:66.3px;">6:00AM</div>
<div class="t c" style="top:353.3px;left:581.8px;width:66.3px;">6</div>
<div class="t c" style="top:353.3px;left:648.1px;width:66.3px;">11.52</div>
<div class="t c" style="top:353.3px;left:714.4px;width:66.3px;">-7</div>
<div class="t c" style="top:353.3px;left:780.7px;width:66.3px;">75</div>
<div class="t c" style="top:353.3px;left:847.0px;width:66.3px;">-27</div>
<div class="t c" style="top:353.3px;left:913.3px;width:66.3px;">1.0333</div>
<div class="t c" style="top:353.3px;left:979.6px;width:66.3px;">420.0</div>
<div class="t c" style="top:353.3px;left:1045.9px;width:66.3px;">420.0</div>
<div class="t c" style="top:353.3px;left:1178.5px;width:66.3px;">6</div>
<div class="t c" style="top:371.7px;left:515.5px;width:66.3px;">7:00AM</div>
<div class="t c" style="top:373.7px;left:581.8px;width:66.3px;">7</div>
<div class="t c" style="top:373.7px;left:648.1px;width:66.3px;">12.52</div>
<div class="t c" style="top:373.7px;left:714.4px;width:66.3px;">8</div>
<div class="t c" style="top:373.7px;left:780.7px;width:66.3px;">75</div>
<div class="t c" style="top:373.7px;left:847.0px;width:66.3px;">-30</div>
<div class="t c" style="top:373.7px;left:913.3px;width:66.3px;">1.0346</div>
<div class="t c" style="top:373.7px;left:979.6px;width:66.3px;">420.0</div>
<div class="t c" style="top:373.7px;left:1045.9px;width:66.3px;">420.0</div>
<div class="t c" style="top:373.7px;left:1178.5px;width:66.3px;">7</div>
<div class="t c" style="top:392.1px;left:515.5px;width:66.3px;">8:00AM</div>
<div class="t c" style="top:394.1px;left:581.8px;width:66.3px;">8</div>
<div class="t c" style="top:394.1px;left:648.1px;width:66.3px;">13.52</div>
<div class="t c" style="top:394.1px;left:714.4px;width:66.3px;">23</div>
<div class="t c" style="top:394.1px;left:780.7px;width:66.3px;">66</div>
<div class="t c" style="top:394.1px;left:847.0px;width:66.3px;">-63</div>
<div class="t c" style="top:394.1px;left:913.3px;width:66.3px;">1.0956</div>
<div class="t c" style="top:394.1px;left:979.6px;width:66.3px;">420.0</div>
<div class="t c" style="top:394.1px;left:1045.9px;width:66.3px;">420.0</div>
<div class="t c" style="top:394.1px;left:1178.5px;width:66.3px;">8</div>
<div class="t c" style="top:412.5px;left:515.5px;width:66.3px;">9:00AM</div>
<div class="t c" style="top:414.5px;left:581.8px;width:66.3px;">9</div>
<div class="t c" style="top:414.5px;left:648.1px;width:66.3px;">14.52</div>
<div class="t c" style="top:414.5px;left:714.4px;width:66.3px;">38</div>
<div class="t c" style="top:414.5px;left:780.7px;width:66.3px;">54</div>
<div class="t c" style="top:414.5px;left:847.0px;width:66.3px;">-78</div>
<div class="t c" style="top:414.5px;left:913.3px;width:66.3px;">1.2346</div>
<div class="t c" style="top:414.5px;left:979.6px;width:66.3px;">420.0</div>
<div class="t c" style="top:414.5px;left:1045.9px;width:66.3px;">420.0</div>
<div class="t c" style="top:414.5px;left:1178.5px;width:66.3px;">9</div>
<div class="t c" style="top:432.9px;left:515.5px;width:66.3px;">10:00AM</div>
<div class="t c" style="top:434.9px;left:581.8px;width:66.3px;">10</div>
<div class="t c" style="top:434.9px;left:648.1px;width:66.3px;">15.52</div>
<div class="t c" style="top:434.9px;left:714.4px;width:66.3px;">53</div>
<div class="t c" style="top:434.9px;left:780.7px;width:66.3px;">42</div>
<div class="t c" style="top:434.9px;left:847.0px;width:66.3px;">-88</div>
<div class="t c" style="top:434.9px;left:913.3px;width:66.3px;">1.5030</div>
<div class="t c" style="top:434.9px;left:979.6px;width:66.3px;">420.0</div>
<div class="t c" style="top:434.9px;left:1045.9px;width:66.3px;">420.0</div>
<div class="t c" style="top:434.9px;left:1178.5px;width:66.3px;">10</div>
<div class="t c" style="top:453.3px;left:515.5px;width:66.3px;">11:00AM</div>
<div class="t c" style="top:455.3px;left:581.8px;width:66.3px;">11</div>
<div class="t c" style="top:455.3px;left:648.1px;width:66.3px;">16.52</div>
<div class="t c" style="top:455.3px;left:714.4px;width:66.3px;">68</div>
<div class="t c" style="top:455.3px;left:780.7px;width:66.3px;">29</div>
<div class="t c" style="top:455.3px;left:847.0px;width:66.3px;">-96</div>
<div class="t c" style="top:455.3px;left:913.3px;width:66.3px;">2.0455</div>
<div class="t c" style="top:455.3px;left:979.6px;width:66.3px;">420.0</div>
<div class="t c" style="top:455.3px;left:1045.9px;width:66.3px;">420.0</div>
<div class="t c" style="top:455.3px;left:1178.5px;width:66.3px;">11</div>
<div class="t c" style="top:473.7px;left:515.5px;width:66.3px;">12:00PM</div>
<div class="t c" style="top:475.7px;left:581.8px;width:66.3px;">12</div>
<div class="t c" style="top:475.7px;left:648.1px;width:66.3px;">17.52</div>
<div class="t c" style="top:475.7px;left:714.4px;width:66.3px;">83</div>
<div class="t c" style="top:475.7px;left:780.7px;width:66.3px;">17</div>
<div class="t c" style="top:475.7px;left:847.0px;width:66.3px;">-104</div>
<div class="t c" style="top:475.7px;left:913.3px;width:66.3px;">3.4096</div>
<div class="t c" style="top:475.7px;left:979.6px;width:66.3px;">420.0</div>
<div class="t c" style="top:475.7px;left:1045.9px;width:66.3px;">420.0</div>
<div class="t c" style="top:475.7px;left:1178.5px;width:66.3px;">12</div>
<div class="t c" style="top:494.1px;left:515.5px;width:66.3px;">1:00PM</div>
<div class="t c" style="top:496.1px;left:581.8px;width:66.3px;">13</div>
<div class="t c" style="top:496.1px;left:648.1px;width:66.3px;">18.52</div>
<div class="t c" style="top:496.1px;left:714.4px;width:66.3px;">98</div>
<div class="t c" style="top:496.1px;left:780.7px;width:66.3px;">5</div>
<div class="t c" style="top:496.1px;left:847.0px;width:66.3px;">111</div>
<div class="t c" style="top:496.1px;left:913.3px;width:66.3px;">10.3633</div>
<div class="t c" style="top:496.1px;left:979.6px;width:66.3px;">420.0</div>
<div class="t c" style="top:496.1px;left:1045.9px;width:66.3px;">420.0</div>
<div class="t c" style="top:496.1px;left:1178.5px;width:66.3px;">13</div>
<div class="t c" style="top:514.5px;left:515.5px;width:66.3px;">2:00PM</div>
<div class="t c" style="top:516.5px;left:581.8px;width:66.3px;">14</div>
<div class="t c" style="top:516.5px;left:648.1px;width:66.3px;">19.52</div>
<div class="t c" style="top:516.5px;left:714.4px;width:66.3px;">113</div>
<div class="t c" style="top:516.5px;left:780.7px;width:66.3px;">-6</div>
<div class="t c" style="top:516.5px;left:847.0px;width:66.3px;">120</div>
<div class="t c" style="top:516.5px;left:913.3px;width:66.3px;">-</div>
<div class="t c" style="top:516.5px;left:979.6px;width:66.3px;">0.0</div>
<div class="t c" style="top:516.5px;left:1045.9px;width:66.3px;">0.0</div>
<div class="t c" style="top:516.5px;left:1178.5px;width:66.3px;">14</div>
<div class="t c" style="top:534.9px;left:515.5px;width:66.3px;">3:00PM</div>
<div class="t c" style="top:536.9px;left:581.8px;width:66.3px;">15</div>
<div class="t c" style="top:536.9px;left:648.1px;width:66.3px;">20.52</div>
<div class="t c" style="top:536.9px;left:714.4px;width:66.3px;">128</div>
<div class="t c" style="top:536.9px;left:780.7px;width:66.3px;">-17</div>
<div class="t c" style="top:536.9px;left:847.0px;width:66.3px;">129</div>
<div class="t c" style="top:536.9px;left:913.3px;width:66.3px;">-</div>
<div class="t c" style="top:536.9px;left:979.6px;width:66.3px;">0.0</div>
<div class="t c" style="top:536.9px;left:1045.9px;width:66.3px;">0.0</div>
<div class="t c" style="top:536.9px;left:1178.5px;width:66.3px;">15</div>
<div class="t c" style="top:555.3px;left:515.5px;width:66.3px;">4:00PM</div>
<div class="t c" style="top:557.3px;left:581.8px;width:66.3px;">16</div>
<div class="t c" style="top:557.3px;left:648.1px;width:66.3px;">21.52</div>
<div class="t c" style="top:557.3px;left:714.4px;width:66.3px;">143</div>
<div class="t c" style="top:557.3px;left:780.7px;width:66.3px;">-25</div>
<div class="t c" style="top:557.3px;left:847.0px;width:66.3px;">141</div>
<div class="t c" style="top:557.3px;left:913.3px;width:66.3px;">-</div>
<div class="t c" style="top:557.3px;left:979.6px;width:66.3px;">0.0</div>
<div class="t c" style="top:557.3px;left:1045.9px;width:66.3px;">0.0</div>
<div class="t c" style="top:557.3px;left:1178.5px;width:66.3px;">16</div>
<div class="t c" style="top:575.7px;left:515.5px;width:66.3px;">5:00PM</div>
<div class="t c" style="top:577.7px;left:581.8px;width:66.3px;">17</div>
<div class="t c" style="top:577.7px;left:648.1px;width:66.3px;">22.52</div>
<div class="t c" style="top:577.7px;left:714.4px;width:66.3px;">158</div>
<div class="t c" style="top:577.7px;left:780.7px;width:66.3px;">-32</div>
<div class="t c" style="top:577.7px;left:847.0px;width:66.3px;">155</div>
<div class="t c" style="top:577.7px;left:913.3px;width:66.3px;">-</div>
<div class="t c" style="top:577.7px;left:979.6px;width:66.3px;">0.0</div>
<div class="t c" style="top:577.7px;left:1045.9px;width:66.3px;">0.0</div>
<div class="t c" style="top:577.7px;left:1178.5px;width:66.3px;">17</div>
<div class="t c" style="top:596.1px;left:515.5px;width:66.3px;">6:00PM</div>
<div class="t c" style="top:598.1px;left:581.8px;width:66.3px;">18</div>
<div class="t c" style="top:598.1px;left:648.1px;width:66.3px;">23.52</div>
<div class="t c" style="top:598.1px;left:714.4px;width:66.3px;">173</div>
<div class="t c" style="top:598.1px;left:780.7px;width:66.3px;">-36</div>
<div class="t c" style="top:598.1px;left:847.0px;width:66.3px;">172</div>
<div class="t c" style="top:598.1px;left:913.3px;width:66.3px;">-</div>
<div class="t c" style="top:598.1px;left:979.6px;width:66.3px;">0.0</div>
<div class="t c" style="top:598.1px;left:1045.9px;width:66.3px;">0.0</div>
<div class="t c" style="top:598.1px;left:1178.5px;width:66.3px;">18</div>
<div class="t c" style="top:616.5px;left:515.5px;width:66.3px;">7:00PM</div>
<div class="t c" style="top:618.5px;left:581.8px;width:66.3px;">19</div>
<div class="t c" style="top:618.5px;left:648.1px;width:66.3px;">24.52</div>
<div class="t c" style="top:618.5px;left:714.4px;width:66.3px;">188</div>
<div class="t c" style="top:618.5px;left:780.7px;width:66.3px;">-35</div>
<div class="t c" style="top:618.5px;left:847.0px;width:66.3px;">171</div>
<div class="t c" style="top:618.5px;left:913.3px;width:66.3px;">-</div>
<div class="t c" style="top:618.5px;left:979.6px;width:66.3px;">0.0</div>
<div class="t c" style="top:618.5px;left:1045.9px;width:66.3px;">0.0</div>
<div class="t c" style="top:618.5px;left:1178.5px;width:66.3px;">19</div>
<div class="t c" style="top:636.9px;left:515.5px;width:66.3px;">8:00PM</div>
<div class="t c" style="top:638.9px;left:581.8px;width:66.3px;">20</div>
<div class="t c" style="top:638.9px;left:648.1px;width:66.3px;">25.52</div>
<div class="t c" style="top:638.9px;left:714.4px;width:66.3px;">203</div>
<div class="t c" style="top:638.9px;left:780.7px;width:66.3px;">-32</div>
<div class="t c" style="top:638.9px;left:847.0px;width:66.3px;">155</div>
<div class="t c" style="top:638.9px;left:913.3px;width:66.3px;">-</div>
<div class="t c" style="top:638.9px;left:979.6px;width:66.3px;">0.0</div>
<div class="t c" style="top:638.9px;left:1045.9px;width:66.3px;">0.0</div>
<div class="t c" style="top:638.9px;left:1178.5px;width:66.3px;">20</div>
<div class="t c" style="top:657.3px;left:515.5px;width:66.3px;">9:00PM</div>
<div class="t c" style="top:659.3px;left:581.8px;width:66.3px;">21</div>
<div class="t c" style="top:659.3px;left:648.1px;width:66.3px;">26.52</div>
<div class="t c" style="top:659.3px;left:714.4px;width:66.3px;">218</div>
<div class="t c" style="top:659.3px;left:780.7px;width:66.3px;">-25</div>
<div class="t c" style="top:659.3px;left:847.0px;width:66.3px;">141</div>
<div class="t c" style="top:659.3px;left:913.3px;width:66.3px;">-</div>
<div class="t c" style="top:659.3px;left:979.6px;width:66.3px;">0.0</div>
<div class="t c" style="top:659.3px;left:1045.9px;width:66.3px;">0.0</div>
<div class="t c" style="top:659.3px;left:1178.5px;width:66.3px;">21</div>
<div class="t c" style="top:677.7px;left:515.5px;width:66.3px;">10:00PM</div>
<div class="t c" style="top:679.7px;left:581.8px;width:66.3px;">22</div>
<div class="t c" style="top:679.7px;left:648.1px;width:66.3px;">27.52</div>
<div class="t c" style="top:679.7px;left:714.4px;width:66.3px;">233</div>
<div class="t c" style="top:679.7px;left:780.7px;width:66.3px;">-16</div>
<div class="t c" style="top:679.7px;left:847.0px;width:66.3px;">129</div>
<div class="t c" style="top:679.7px;left:913.3px;width:66.3px;">-</div>
<div class="t c" style="top:679.7px;left:979.6px;width:66.3px;">0.0</div>
<div class="t c" style="top:679.7px;left:1045.9px;width:66.3px;">0.0</div>
<div class="t c" style="top:679.7px;left:1178.5px;width:66.3px;">22</div>
<div class="a" style="left:30px;top:694.3px;width:1224px;height:25px;background:#f0f0f0;border-top:1px solid #dcdcdc"></div>
<svg class="a" style="left:40px;top:699px" width="32" height="14"><polygon points="9.3,2 9.3,11 3,6.5" fill="#bdbdbd"/><polygon points="22.1,2 22.1,11 28.5,6.5" fill="#bdbdbd"/></svg>
<div class="a" style="left:82.3px;top:696px;width:1px;height:20px;background:#dadada"></div>
<div class="a" style="left:84.5px;top:696.8px;width:91.1px;height:16.4px;background:#7230a6"></div>
<div class="t c b" style="left:84.5px;top:700px;width:91.1px;color:#fff;font-size:10px;line-height:12px">RTS METHOD</div>
<div class="a" style="left:179.5px;top:695.5px;width:139.1px;height:18.5px;background:linear-gradient(#fff6d8 10%,#fde39a);border:1.5px solid #fbfbfb;border-top:none;box-shadow:0 1px 1px rgba(0,0,0,0.08)"></div>
<div class="t c b" style="left:179.5px;top:700px;width:139.1px;color:#5a9752;font-size:10px;line-height:12px">DESIGN CONDITIONS</div>
<div class="a" style="left:322.7px;top:696.8px;width:60.8px;height:16.4px;background:#14246b"></div>
<div class="t c b" style="left:322.7px;top:700px;width:60.8px;color:#fff;font-size:10px;line-height:12px">WALL</div>
<div class="a" style="left:389.5px;top:696.8px;width:102.2px;height:16.4px;background:#14246b"></div>
<div class="t c b" style="left:389.5px;top:700px;width:102.2px;color:#fff;font-size:10px;line-height:12px">WALL (Exercise)</div>
<div class="a" style="left:497.8px;top:696.8px;width:60.9px;height:16.4px;background:#14246b"></div>
<div class="t c b" style="left:497.8px;top:700px;width:60.9px;color:#fff;font-size:10px;line-height:12px">ROOF</div>
<div class="a" style="left:565.1px;top:696.8px;width:130.9px;height:16.4px;background:#14246b"></div>
<div class="t c b" style="left:565.1px;top:700px;width:130.9px;color:#fff;font-size:10px;line-height:12px">INTERIOR SURFACES</div>
<div class="a" style="left:702.2px;top:696.8px;width:67.3px;height:16.4px;background:#14246b"></div>
<div class="t c b" style="left:702.2px;top:700px;width:67.3px;color:#fff;font-size:10px;line-height:12px">WINDOW</div>
<div class="a" style="left:775.4px;top:696.8px;width:60.8px;height:16.4px;background:#14246b"></div>
<div class="t c b" style="left:775.4px;top:700px;width:60.8px;color:#fff;font-size:10px;line-height:12px">DOOR</div>
<div class="a" style="left:842.7px;top:696.8px;width:62.6px;height:16.4px;background:#0a4fc2"></div>
<div class="t c b" style="left:842.7px;top:700px;width:62.6px;color:#fff;font-size:10px;line-height:12px">PEOPLE</div>
<div class="a" style="left:911.4px;top:696.8px;width:70.3px;height:16.4px;background:#0a4fc2"></div>
<div class="t c b" style="left:911.4px;top:700px;width:70.3px;color:#fff;font-size:10px;line-height:12px">LIGHTING</div>
<div class="a" style="left:988.0px;top:696.8px;width:83.8px;height:16.4px;background:#0a4fc2"></div>
<div class="t c b" style="left:988.0px;top:700px;width:83.8px;color:#fff;font-size:10px;line-height:12px">EQUIPMENT</div>
<div class="a" style="left:1077.8px;top:696.8px;width:63.7px;height:16.4px;background:#1a73e8"></div>
<div class="t c b" style="left:1077.8px;top:700px;width:63.7px;color:#fff;font-size:10px;line-height:12px">SYSTEM</div>
<svg class="a" style="left:1155px;top:699px" width="12" height="12"><path d="M6,1.2 V10.8 M1.2,6 H10.8" stroke="#4a4a4a" stroke-width="1.6"/></svg>
<div class="a" style="left:30px;top:715.8px;width:1224px;height:1.6px;background:#d6d6d6"></div>
<div class="a" style="left:1176.5px;top:696px;width:1px;height:20px;background:#dadada"></div>
<div class="a" style="left:983px;top:716.5px;width:31px;height:2.5px;background:#c4c4c4;border-radius:1px"></div>
<svg class="a" style="left:0;top:0" width="1284" height="750"><path d="M74.20,45.60 L77.27,46.26 L78.30,50.62 L83.59,52.04 L86.66,48.77 L91.98,51.84 L90.69,56.14 L94.56,60.01 L98.86,58.72 L101.93,64.04 L98.66,67.11 L100.08,72.40 L104.44,73.43 L104.44,79.57 L100.08,80.60 L98.66,85.89 L101.93,88.96 L98.86,94.28 L94.56,92.99 L90.69,96.86 L91.98,101.16 L86.66,104.23 L83.59,100.96 L78.30,102.38 L77.27,106.74 L74.20,107.40 L74.20,96.10 A19.6,19.6 0 0 0 74.20,56.90 Z" fill="#0b4fc6"/><line x1="65.90" y1="76.70" x2="65.90" y2="57.20" stroke="#2a55b8" stroke-width="1.6"/><circle cx="65.90" cy="55.00" r="2.2" fill="none" stroke="#2a55b8" stroke-width="1.6"/><line x1="65.90" y1="66.90" x2="70.70" y2="63.70" stroke="#2a55b8" stroke-width="1.6"/><line x1="65.90" y1="66.90" x2="61.10" y2="63.70" stroke="#2a55b8" stroke-width="1.6"/><line x1="65.90" y1="61.50" x2="70.70" y2="58.30" stroke="#2a55b8" stroke-width="1.6"/><line x1="65.90" y1="61.50" x2="61.10" y2="58.30" stroke="#2a55b8" stroke-width="1.6"/><line x1="65.90" y1="76.70" x2="82.79" y2="66.95" stroke="#2a55b8" stroke-width="1.6"/><circle cx="84.69" cy="65.85" r="2.2" fill="none" stroke="#2a55b8" stroke-width="1.6"/><line x1="74.39" y1="71.80" x2="79.56" y2="74.36" stroke="#2a55b8" stroke-width="1.6"/><line x1="74.39" y1="71.80" x2="74.76" y2="66.04" stroke="#2a55b8" stroke-width="1.6"/><line x1="79.06" y1="69.10" x2="84.23" y2="71.66" stroke="#2a55b8" stroke-width="1.6"/><line x1="79.06" y1="69.10" x2="79.43" y2="63.34" stroke="#2a55b8" stroke-width="1.6"/><line x1="65.90" y1="76.70" x2="82.79" y2="86.45" stroke="#2a55b8" stroke-width="1.6"/><circle cx="84.69" cy="87.55" r="2.2" fill="none" stroke="#2a55b8" stroke-width="1.6"/><line x1="74.39" y1="81.60" x2="74.76" y2="87.36" stroke="#2a55b8" stroke-width="1.6"/><line x1="74.39" y1="81.60" x2="79.56" y2="79.04" stroke="#2a55b8" stroke-width="1.6"/><line x1="79.06" y1="84.30" x2="79.43" y2="90.06" stroke="#2a55b8" stroke-width="1.6"/><line x1="79.06" y1="84.30" x2="84.23" y2="81.74" stroke="#2a55b8" stroke-width="1.6"/><line x1="65.90" y1="76.70" x2="65.90" y2="96.20" stroke="#2a55b8" stroke-width="1.6"/><circle cx="65.90" cy="98.40" r="2.2" fill="none" stroke="#2a55b8" stroke-width="1.6"/><line x1="65.90" y1="86.50" x2="61.10" y2="89.70" stroke="#2a55b8" stroke-width="1.6"/><line x1="65.90" y1="86.50" x2="70.70" y2="89.70" stroke="#2a55b8" stroke-width="1.6"/><line x1="65.90" y1="91.90" x2="61.10" y2="95.10" stroke="#2a55b8" stroke-width="1.6"/><line x1="65.90" y1="91.90" x2="70.70" y2="95.10" stroke="#2a55b8" stroke-width="1.6"/><line x1="65.90" y1="76.70" x2="49.01" y2="86.45" stroke="#2a55b8" stroke-width="1.6"/><circle cx="47.11" cy="87.55" r="2.2" fill="none" stroke="#2a55b8" stroke-width="1.6"/><line x1="57.41" y1="81.60" x2="52.24" y2="79.04" stroke="#2a55b8" stroke-width="1.6"/><line x1="57.41" y1="81.60" x2="57.04" y2="87.36" stroke="#2a55b8" stroke-width="1.6"/><line x1="52.74" y1="84.30" x2="47.57" y2="81.74" stroke="#2a55b8" stroke-width="1.6"/><line x1="52.74" y1="84.30" x2="52.37" y2="90.06" stroke="#2a55b8" stroke-width="1.6"/><line x1="65.90" y1="76.70" x2="49.01" y2="66.95" stroke="#2a55b8" stroke-width="1.6"/><circle cx="47.11" cy="65.85" r="2.2" fill="none" stroke="#2a55b8" stroke-width="1.6"/><line x1="57.41" y1="71.80" x2="57.04" y2="66.04" stroke="#2a55b8" stroke-width="1.6"/><line x1="57.41" y1="71.80" x2="52.24" y2="74.36" stroke="#2a55b8" stroke-width="1.6"/><line x1="52.74" y1="69.10" x2="52.37" y2="63.34" stroke="#2a55b8" stroke-width="1.6"/><line x1="52.74" y1="69.10" x2="47.57" y2="71.66" stroke="#2a55b8" stroke-width="1.6"/></svg>
</div></div></body></html>
